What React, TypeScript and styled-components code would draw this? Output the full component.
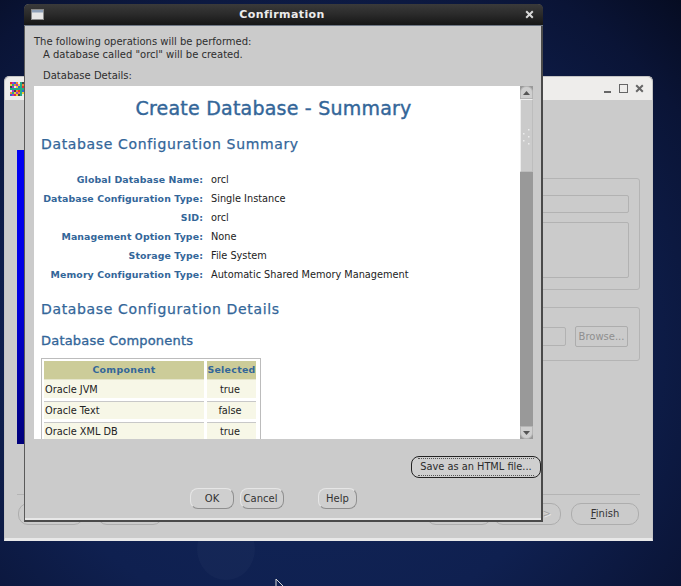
import React from 'react';
import styled, { createGlobalStyle } from 'styled-components';

const GlobalStyle = createGlobalStyle`
  html, body { margin: 0; padding: 0; }
  body { font-family: "DejaVu Sans", sans-serif; }
`;

const Desktop = styled.div`
  position: relative;
  width: 681px;
  height: 586px;
  overflow: hidden;
  background: radial-gradient(ellipse at 45% 60%, #12275a 0%, #0f2050 55%, #0a1436 85%, #060c22 100%);
`;

const WallpaperSpot = styled.div`
  position: absolute;
  left: 197px;
  top: 518px;
  width: 58px;
  height: 62px;
  border-radius: 50%;
  background: rgba(255, 255, 255, 0.025);
`;

/* ---- window behind ---- */
const BackWindow = styled.div`
  position: absolute;
  left: 4px;
  top: 76px;
  width: 649px;
  height: 465px;
  box-sizing: border-box;
  background: #cbcbcb;
  border: 1px solid #c4c4c4;
  border-bottom: 3px solid #e8e8e8;
  border-radius: 5px 5px 0 0;
  display: flex;
  flex-direction: column;
`;

const BackTitle = styled.div`
  height: 23px;
  flex: none;
  background: #eeedeb;
  border-radius: 5px 5px 0 0;
  display: flex;
  align-items: center;
  justify-content: space-between;
  padding: 0 8px 0 5px;
`;

const WindowControls = styled.div`
  display: flex;
  gap: 7px;
  align-items: center;
`;

const BackBody = styled.div`
  flex: 1;
  display: flex;
  flex-direction: column;
  padding: 50px 12px 0 12px;
  min-height: 0;
`;

const BackMain = styled.div`
  display: flex;
  gap: 0;
  height: 294px;
`;

const BlueBar = styled.div`
  width: 8px;
  height: 294px;
  background: linear-gradient(180deg, #0000f2 0%, #0000e0 50%, #00007a 100%);
  flex: none;
`;

const Groups = styled.div`
  flex: 1;
  display: flex;
  flex-direction: column;
  align-items: flex-end;
  margin-top: 28px;
  gap: 17px;
`;

const GroupBox = styled.div<{ $height: number; $top: number }>`
  width: 120px;
  height: ${(p) => p.$height}px;
  box-sizing: border-box;
  border: 1px solid #b4b4b4;
  border-radius: 3px;
  display: flex;
  flex-direction: column;
  align-items: flex-end;
  padding: ${(p) => p.$top}px 10px 0 0;
  gap: 9px;
`;

const FieldRow = styled.div`
  display: flex;
  align-items: center;
  gap: 9px;
  margin-right: 1px;
`;

const Field = styled.div<{ $width: number; $height: number }>`
  width: ${(p) => p.$width}px;
  height: ${(p) => p.$height}px;
  box-sizing: border-box;
  border: 1px solid #b2b2b2;
  border-radius: 2px;
`;

const BrowseButton = styled.div`
  width: 53px;
  height: 21px;
  box-sizing: border-box;
  border: 1px solid #adadad;
  border-radius: 2px;
  color: #8f8f8f;
  font-size: 10px;
  line-height: 19px;
  text-align: center;
`;

const BackFooter = styled.div`
  display: flex;
  flex-direction: column;
  margin-top: 50px;
`;

const Separator = styled.div`
  height: 1px;
  background: #b4b4b4;
`;

const BackButtons = styled.div`
  display: flex;
  margin-top: 8px;
  justify-content: space-between;
  padding: 0 1px 0 1px;
`;

const ButtonGroup = styled.div`
  display: flex;
  align-items: center;
`;

const GhostButton = styled.div<{ $width: number; $gap?: number }>`
  width: ${(p) => p.$width}px;
  height: 22px;
  margin-left: ${(p) => p.$gap ?? 0}px;
  box-sizing: border-box;
  border: 1px solid #adadad;
  border-radius: 10px;
  color: #333;
  font-size: 10px;
  line-height: 20px;
  text-align: center;
`;

const NextButton = styled(GhostButton)`
  color: #a4a4a4;
  text-align: right;
  padding-right: 9px;
  text-shadow: 1px 1px 0 #e6e6e6;
`;

const Mnemonic = styled.span`
  text-decoration: underline;
`;

/* ---- confirmation dialog ---- */
const Dialog = styled.div`
  position: absolute;
  left: 24px;
  top: 4px;
  width: 519px;
  height: 518px;
  box-sizing: border-box;
  background: #cbcbcb;
  border-left: 1px solid #5a5a5a;
  border-right: 2px solid #4a4a4a;
  border-bottom: 2px solid #4a4a4a;
  border-radius: 5px 5px 0 0;
  box-shadow: inset 0 -2px 0 #e8e8e8;
  display: flex;
  flex-direction: column;
`;

const TitleBar = styled.div`
  position: relative;
  height: 21px;
  flex: none;
  margin-left: -1px;
  margin-right: -2px;
  background: linear-gradient(180deg, #3a3a3a 0%, #2a2a2a 50%, #161616 100%);
  border-bottom: 1px solid #6d7684;
  border-radius: 5px 5px 0 0;
  display: flex;
  align-items: center;
  justify-content: space-between;
  padding: 0 9px 0 7px;
`;

const TitleText = styled.div`
  position: absolute;
  left: 0;
  right: 0;
  text-align: center;
  color: #ececec;
  font-size: 11px;
  font-weight: bold;
  letter-spacing: 0.4px;
  padding-right: 3px;
`;

const DialogBody = styled.div`
  flex: 1;
  display: flex;
  flex-direction: column;
  padding: 9px 8px 0 9px;
  min-height: 0;
`;

const Line = styled.div<{ $indent?: boolean }>`
  font-size: 10px;
  line-height: 13px;
  color: #2e2e2e;
  padding-left: ${(p) => (p.$indent ? 9 : 0)}px;
`;

const DetailsLabel = styled(Line)`
  margin-top: 8px;
  margin-bottom: 4px;
`;

const ScrollPane = styled.div`
  height: 353px;
  display: flex;
  flex: none;
`;

const Page = styled.div`
  flex: 1;
  background: #fff;
  overflow: hidden;
  padding: 0 0 0 7px;
  color: #336699;
`;

const PageTitle = styled.h1`
  margin: 9px 0 0 0;
  padding-right: 14px;
  font-size: 19px;
  line-height: 26px;
  font-weight: 500;
  text-align: center;
  letter-spacing: 0.22px;
  -webkit-text-stroke: 0.4px #336699;
`;

const SectionTitle = styled.h2`
  margin: 13px 0 0 0;
  font-size: 14px;
  line-height: 20px;
  font-weight: 500;
  letter-spacing: 0.65px;
  -webkit-text-stroke: 0.25px #336699;
`;

const SubTitle = styled.h3`
  margin: 13px 0 0 0;
  font-size: 13px;
  line-height: 18px;
  font-weight: 500;
  letter-spacing: 0.2px;
  -webkit-text-stroke: 0.35px #336699;
`;

const SummaryGrid = styled.div`
  display: grid;
  grid-template-columns: 162px auto;
  column-gap: 8px;
  grid-auto-rows: 19px;
  margin-top: 16px;
  margin-bottom: 15px;
  align-items: center;
`;

const Prompt = styled.div`
  text-align: right;
  font-size: 9.4px;
  font-weight: bold;
  color: #336699;
  letter-spacing: 0.1px;
  white-space: nowrap;
`;

const Value = styled.div`
  font-size: 9.75px;
  color: #222;
  white-space: nowrap;
`;

const Table = styled.div`
  width: 220px;
  box-sizing: border-box;
  margin-top: 8px;
  border: 1px solid #bcbcbc;
  padding: 2px 4px 0 2px;
  display: grid;
  grid-template-columns: 160px 49px;
  column-gap: 3px;
  row-gap: 3px;
  font-size: 9.75px;
`;

const HeadCell = styled.div`
  height: 19px;
  box-sizing: border-box;
  background: #cccc99;
  color: #336699;
  font-size: 9.4px;
  font-weight: bold;
  text-align: center;
  line-height: 18px;
  border-bottom: 1px solid #e5e5cc;
  letter-spacing: 0.3px;
  margin-bottom: -3px;
`;

const Cell = styled.div<{ $center?: boolean }>`
  height: 18px;
  box-sizing: border-box;
  background: #f7f7e7;
  color: #222;
  line-height: 17px;
  padding: 0 ${(p) => (p.$center ? 3 : 0)}px 0 ${(p) => (p.$center ? 0 : 1)}px;
  text-align: ${(p) => (p.$center ? 'center' : 'left')};
  border-top: 1px solid #c8c8c8;
  &:nth-child(-n + 4) { border-top-color: #f7f7e7; }
`;

const ScrollBar = styled.div`
  width: 13px;
  flex: none;
  background: #999;
  display: flex;
  flex-direction: column;
`;

const ScrollButton = styled.div<{ $up?: boolean }>`
  height: 13px;
  flex: none;
  box-sizing: border-box;
  background: #cfcfcf;
  border: 1px solid #b5b5b5;
  border-radius: ${(p) => (p.$up ? '6px 6px 0 0' : '0 0 6px 6px')};
  display: flex;
  align-items: center;
  justify-content: center;
`;

const Thumb = styled.div`
  height: 73px;
  flex: none;
  box-sizing: border-box;
  background: #cbcbcb;
  border: 1px solid #bdbdbd;
  border-left-color: #eee;
  border-top: 1px solid #eee;
  display: flex;
  align-items: center;
  justify-content: center;
  padding-top: 2px;
`;

const Track = styled.div`
  flex: 1;
`;

const SaveRow = styled.div`
  display: flex;
  justify-content: flex-end;
  margin: 17px -8px 0 0;
`;

const SaveButton = styled.div`
  width: 130px;
  height: 22px;
  box-sizing: border-box;
  background: #cfcfcf;
  border: 1px solid #222;
  border-radius: 8px;
  padding: 1px 6px;
  display: flex;
`;

const SaveLabel = styled.div`
  flex: 1;
  text-align: center;
  font-size: 9.8px;
  line-height: 16px;
  color: #2b2b2b;
  border-top: 1px dotted #555;
  border-bottom: 1px dotted #555;
  white-space: nowrap;
`;

const DialogButtons = styled.div`
  display: flex;
  margin-top: 10px;
  padding-left: 156px;
`;

const RaisedButton = styled.div<{ $width: number; $gap?: number; $shift?: number }>`
  width: ${(p) => p.$width}px;
  height: 21px;
  margin-left: ${(p) => p.$gap ?? 0}px;
  padding-right: ${(p) => p.$shift ?? 0}px;
  box-sizing: border-box;
  background: #cfcfcf;
  border: 1px solid #e6e6e6;
  border-right-color: #8f8f8f;
  border-bottom-color: #8f8f8f;
  border-radius: 8px;
  color: #333;
  font-size: 10px;
  line-height: 19px;
  text-align: center;
`;

const Pointer = styled.svg`
  position: absolute;
  left: 275px;
  top: 579px;
`;

const JavaIcon = () => {
  const colors = ['#d33', '#2a8', '#36c', '#ec3', '#e7e7e7', '#a3c', '#444', '#e83'];
  const cells: React.ReactNode[] = [];
  for (let y = 0; y < 7; y++) {
    for (let x = 0; x < 7; x++) {
      cells.push(<rect key={`${x}-${y}`} x={x * 2} y={y * 2} width="2" height="2" fill={colors[(x * 5 + y * 3 + x * y) % 8]} />);
    }
  }
  return <svg width="14" height="14" viewBox="0 0 14 14">{cells}</svg>;
};

const WindowIcon = () => (
  <svg width="13" height="11" viewBox="0 0 13 11">
    <rect x="0.5" y="0.5" width="12" height="10" fill="#e6e6e6" stroke="#8a8a8a" />
    <rect x="1" y="1" width="11" height="2.5" fill="#8ea0b8" />
  </svg>
);

const CloseGlyph = ({ color, size = 9 }: { color: string; size?: number }) => (
  <svg width={size} height={size} viewBox="0 0 9 9">
    <path d="M1.2 1.2 L7.8 7.8 M7.8 1.2 L1.2 7.8" stroke={color} strokeWidth="2" />
  </svg>
);

const Arrow = ({ up }: { up?: boolean }) => (
  <svg width="7" height="4" viewBox="0 0 7 4">
    <path d={up ? 'M3.5 0 L7 4 L0 4 Z' : 'M0 0 L7 0 L3.5 4 Z'} fill="#555" />
  </svg>
);

const GripDots = () => (
  <svg width="9" height="17" viewBox="0 0 9 17">
    {[[6, 1], [1, 5], [6, 8], [1, 12], [6, 15]].map(([x, y]) => (
      <rect key={`${x}-${y}`} x={x} y={y} width="1.5" height="1.5" fill="#ececec" />
    ))}
  </svg>
);

const summary = [
  ['Global Database Name:', 'orcl'],
  ['Database Configuration Type:', 'Single Instance'],
  ['SID:', 'orcl'],
  ['Management Option Type:', 'None'],
  ['Storage Type:', 'File System'],
  ['Memory Configuration Type:', 'Automatic Shared Memory Management'],
];

const components = [
  ['Oracle JVM', 'true'],
  ['Oracle Text', 'false'],
  ['Oracle XML DB', 'true'],
];

export default function App() {
  return (
    <>
      <GlobalStyle />
      <Desktop>
        <WallpaperSpot />
        <BackWindow>
          <BackTitle>
            <JavaIcon />
            <WindowControls>
              <svg width="9" height="9" viewBox="0 0 9 9"><rect x="1" y="7" width="7" height="2" fill="#666" /></svg>
              <svg width="9" height="9" viewBox="0 0 9 9"><rect x="0.5" y="0.5" width="8" height="8" fill="none" stroke="#666" /></svg>
              <CloseGlyph color="#666" />
            </WindowControls>
          </BackTitle>
          <BackBody>
            <BackMain>
              <BlueBar />
              <Groups>
                <GroupBox $height={112} $top={16}>
                  <Field $width={110} $height={18} />
                  <Field $width={110} $height={56} />
                </GroupBox>
                <GroupBox $height={54} $top={18}>
                  <FieldRow>
                    <Field $width={40} $height={19} />
                    <BrowseButton>Browse...</BrowseButton>
                  </FieldRow>
                </GroupBox>
              </Groups>
            </BackMain>
            <BackFooter>
              <Separator />
              <BackButtons>
                <ButtonGroup>
                  <GhostButton $width={66} />
                  <GhostButton $width={66} $gap={13} />
                </ButtonGroup>
                <ButtonGroup>
                  <GhostButton $width={66} />
                  <NextButton $width={68} $gap={1}>&gt;</NextButton>
                  <GhostButton $width={68} $gap={10}><Mnemonic>F</Mnemonic>inish</GhostButton>
                </ButtonGroup>
              </BackButtons>
            </BackFooter>
          </BackBody>
        </BackWindow>

        <Dialog>
          <TitleBar>
            <WindowIcon />
            <TitleText>Confirmation</TitleText>
            <CloseGlyph color="#d8d8d8" />
          </TitleBar>
          <DialogBody>
            <Line>The following operations will be performed:</Line>
            <Line $indent>A database called "orcl" will be created.</Line>
            <DetailsLabel $indent>Database Details:</DetailsLabel>
            <ScrollPane>
              <Page>
                <PageTitle>Create Database - Summary</PageTitle>
                <SectionTitle>Database Configuration Summary</SectionTitle>
                <SummaryGrid>
                  {summary.map(([label, value]) => (
                    <React.Fragment key={label}>
                      <Prompt>{label}</Prompt>
                      <Value>{value}</Value>
                    </React.Fragment>
                  ))}
                </SummaryGrid>
                <SectionTitle>Database Configuration Details</SectionTitle>
                <SubTitle>Database Components</SubTitle>
                <Table>
                  <HeadCell>Component</HeadCell>
                  <HeadCell>Selected</HeadCell>
                  {components.map(([name, selected]) => (
                    <React.Fragment key={name}>
                      <Cell>{name}</Cell>
                      <Cell $center>{selected}</Cell>
                    </React.Fragment>
                  ))}
                </Table>
              </Page>
              <ScrollBar>
                <ScrollButton $up><Arrow up /></ScrollButton>
                <Thumb><GripDots /></Thumb>
                <Track />
                <ScrollButton><Arrow /></ScrollButton>
              </ScrollBar>
            </ScrollPane>
            <SaveRow>
              <SaveButton><SaveLabel>Save as an HTML file...</SaveLabel></SaveButton>
            </SaveRow>
            <DialogButtons>
              <RaisedButton $width={44}>OK</RaisedButton>
              <RaisedButton $width={44} $gap={6} $shift={3}>Cancel</RaisedButton>
              <RaisedButton $width={39} $gap={34}>Help</RaisedButton>
            </DialogButtons>
          </DialogBody>
        </Dialog>

        <Pointer width="9" height="7" viewBox="0 0 9 7">
          <path d="M1 0 L1 7 M1 0 L8 7" stroke="#d8d8d8" strokeWidth="1" fill="#111" />
        </Pointer>
      </Desktop>
    </>
  );
}
